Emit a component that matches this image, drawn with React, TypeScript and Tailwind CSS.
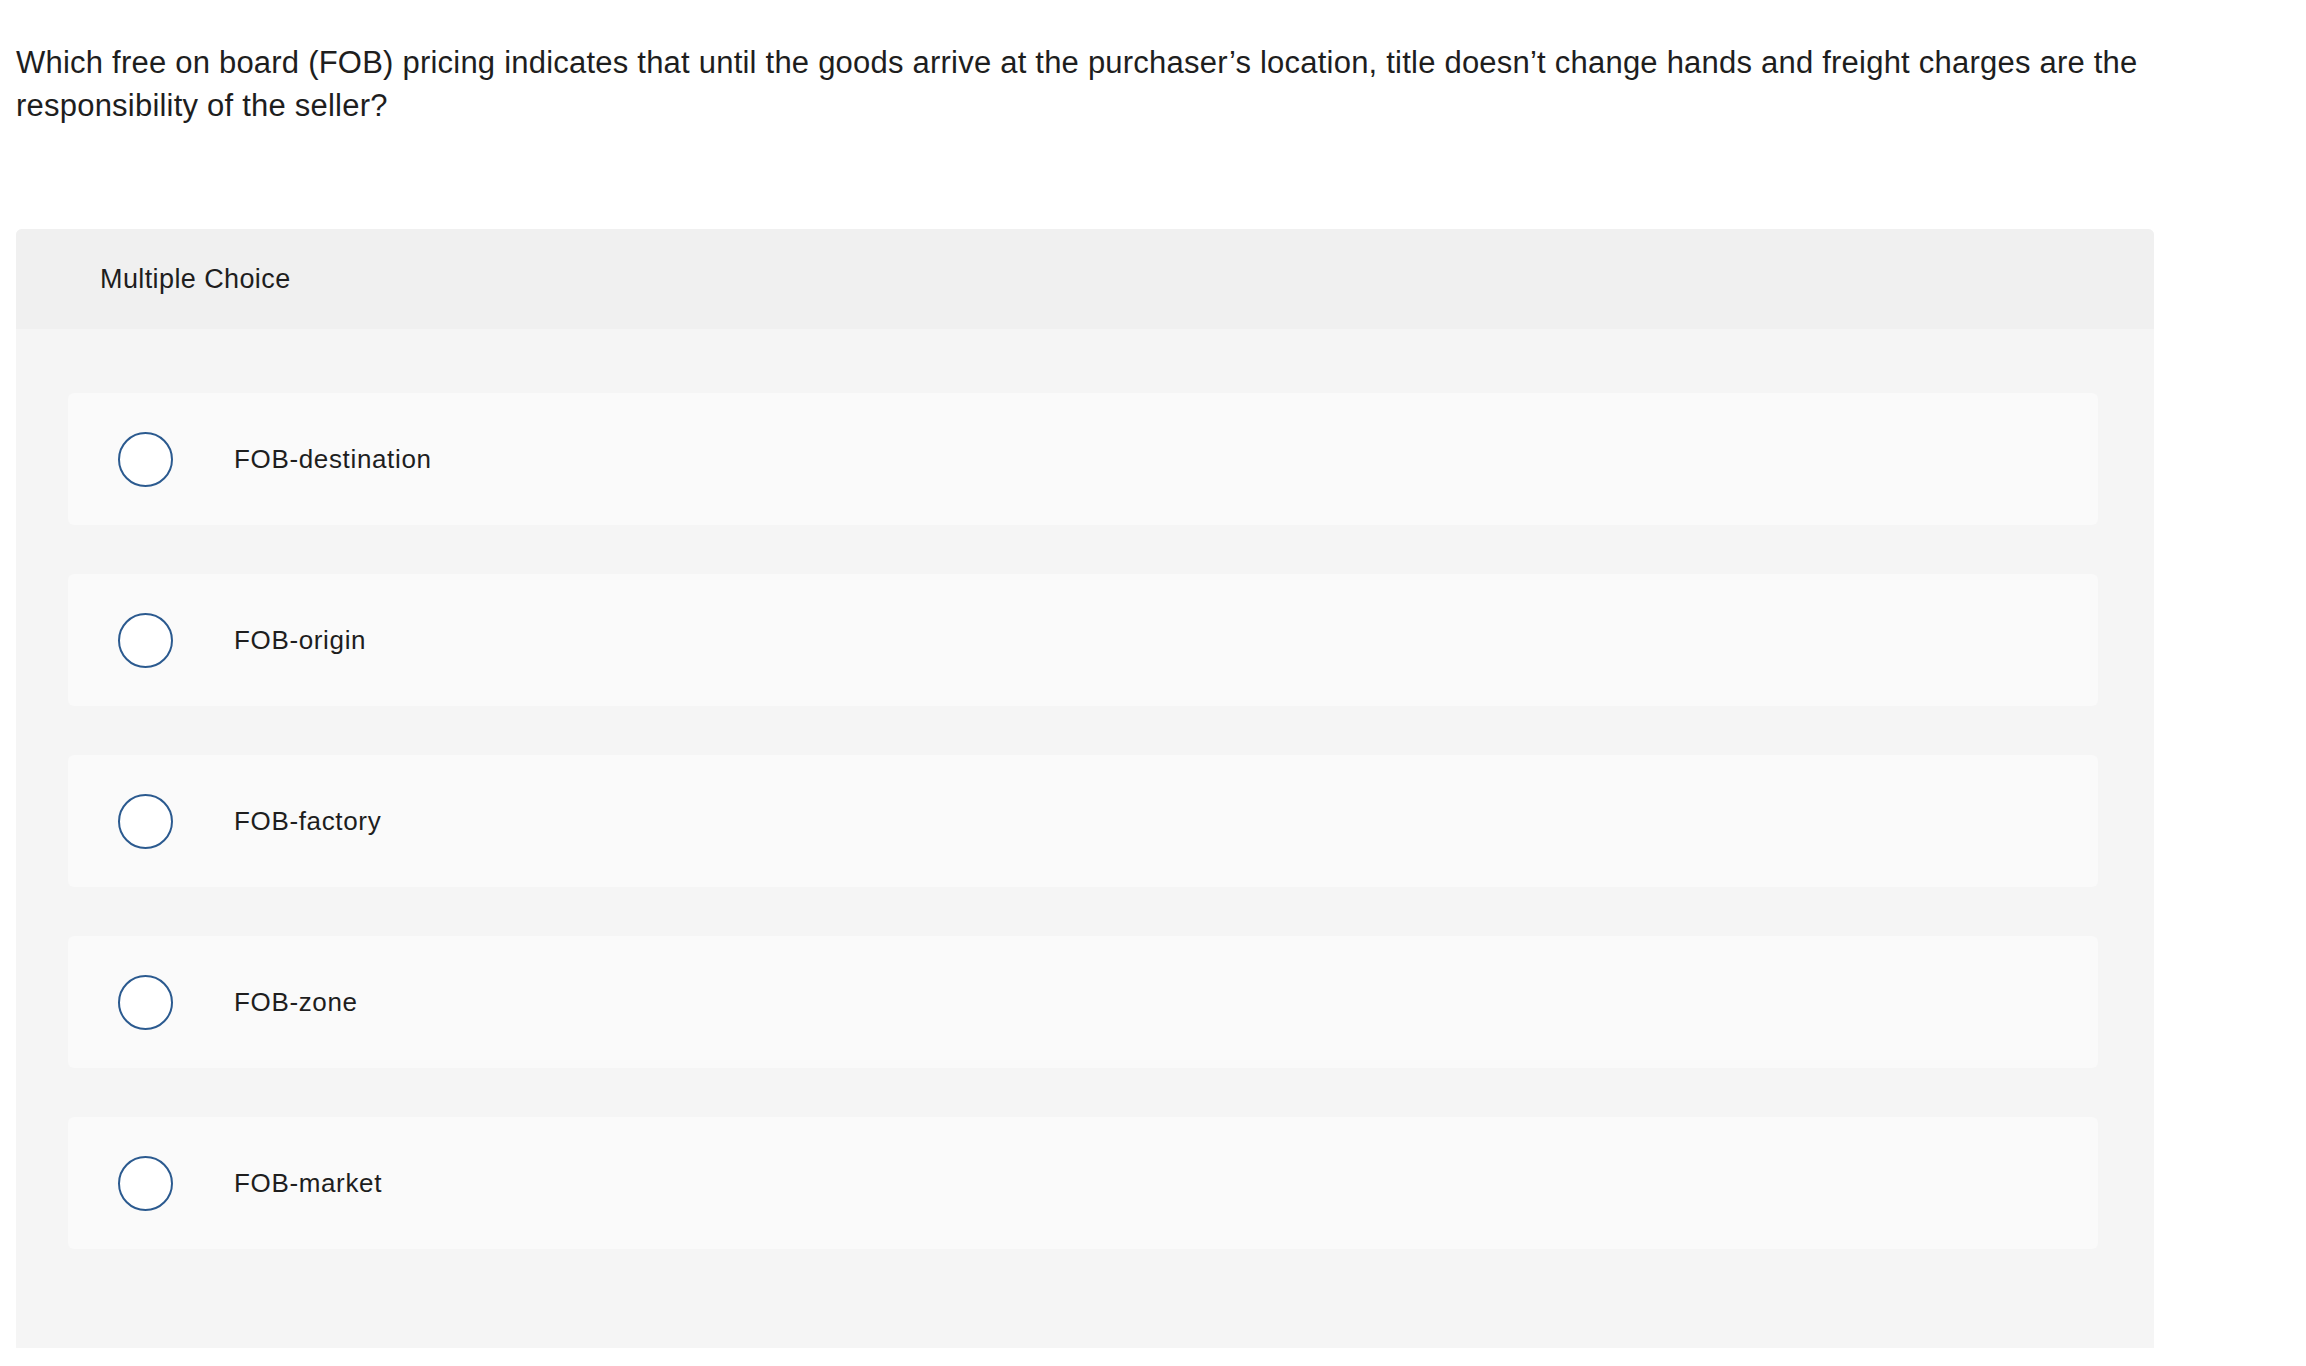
import React from "react";

const options = ["FOB-destination", "FOB-origin", "FOB-factory", "FOB-zone", "FOB-market"];

export default function App() {
  return (
    <div className="w-[2306px] h-[1366px] bg-white text-[#1e1e1e] font-['Liberation_Sans',Arial,sans-serif] overflow-hidden">
      <div className="pl-4 pt-[41px]">
        <p className="w-[2150px] text-[31px] leading-[43px] tracking-[0.22px]">
          Which free on board (FOB) pricing indicates that until the goods arrive at the purchaser’s location, title doesn’t change hands and freight charges are the responsibility of the seller?
        </p>
      </div>
      <div className="mt-[102px] ml-4 w-[2138px] rounded-t-md bg-[#f5f5f5]">
        <div className="h-[100px] rounded-t-md bg-[#f0f0f0] flex items-center pl-[84px] text-[27px] tracking-[0.4px]">
          Multiple Choice
        </div>
        <div className="pt-[64px] pb-[99px] pl-[52px] pr-[56px] flex flex-col gap-[49px]">
          {options.map((o) => (
            <div key={o} className="h-[132px] rounded-md bg-[#fafafa] flex items-center pl-[50px]">
              <div className="w-[55px] h-[55px] rounded-full border-2 border-[#2b5a8f] bg-white shrink-0" />
              <span className="ml-[61px] text-[26px] tracking-[0.65px]">{o}</span>
            </div>
          ))}
        </div>
      </div>
    </div>
  );
}
